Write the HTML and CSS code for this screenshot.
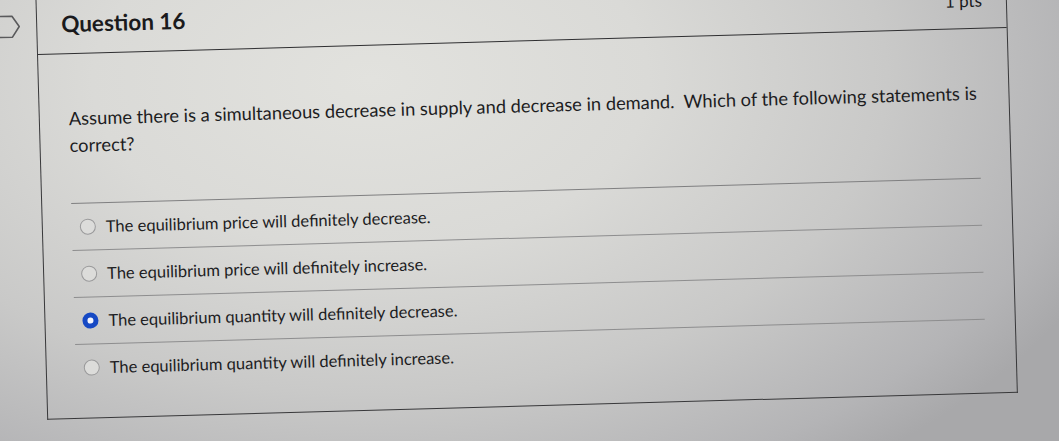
FILE: index.html
```html
<!DOCTYPE html>
<html lang="en">
<head>
<meta charset="utf-8">
<title>Question 16</title>
<link rel="stylesheet" href="styles.css">
</head>
<body>
<div class="page">
  <section class="card">
    <header class="card-header">
      <svg class="flag" width="40" height="24" viewBox="0 0 40 24" aria-hidden="true">
        <path d="M0 1.5 H31 L38 12 L31 22.5 H0" fill="none" stroke="#5a5a5c" stroke-width="1.6" stroke-linejoin="round"/>
      </svg>
      <h2 class="title">Question 16</h2>
      <span class="points">1 pts</span>
    </header>
    <div class="card-body">
      <p class="question">Assume there is a simultaneous decrease in supply and decrease in demand.&nbsp; Which of the following statements is correct?</p>
      <ul class="answers">
        <li class="answer"><span class="radio"></span><span class="answer-text">The equilibrium price will definitely decrease.</span></li>
        <li class="answer"><span class="radio"></span><span class="answer-text">The equilibrium price will definitely increase.</span></li>
        <li class="answer"><span class="radio radio-checked"></span><span class="answer-text">The equilibrium quantity will definitely decrease.</span></li>
        <li class="answer"><span class="radio"></span><span class="answer-text">The equilibrium quantity will definitely increase.</span></li>
      </ul>
    </div>
  </section>
</div>
</body>
</html>
```

FILE: styles.css
```css
html, body {
  margin: 0;
  padding: 0;
}

body {
  width: 1059px;
  height: 441px;
  overflow: hidden;
  font-family: Lato, "Open Sans", sans-serif;
  color: #1d1d1f;
  background: radial-gradient(ellipse 75% 110% at 35% 18%, #e2e2de 0%, #dadad7 35%, #c9c9c8 65%, #b4b4b6 90%, #a8a8aa 100%);
}

.page {
  padding-left: 37px;
}

.card {
  width: 971px;
  box-sizing: border-box;
  border: 1px solid #38383a;
  border-top: 0;
  transform: rotate(-1.6deg);
  transform-origin: 0 54px;
}

.card-header {
  position: relative;
  height: 55px;
  box-sizing: border-box;
  border-bottom: 1px solid #2f2f31;
  display: flex;
  justify-content: space-between;
  align-items: baseline;
  padding: 11px 24px 0 24px;
}

.flag {
  position: absolute;
  left: -56px;
  top: 14px;
}

.title {
  margin: 0;
  font-size: 22.5px;
  font-weight: 700;
  line-height: 28px;
  color: #1a1a1c;
}

.points {
  font-size: 17px;
  color: #1a1a1c;
}

.card-body {
  padding: 51px 30px 27px 29px;
}

.question {
  margin: 0 -12px 0 0;
  font-size: 18.3px;
  line-height: 27px;
  color: #1d1d1f;
}

.answers {
  list-style: none;
  margin: 44px 0 0;
  padding: 0;
}

.answer {
  height: 47px;
  box-sizing: border-box;
  border-top: 1px solid #8d8d8e;
  display: flex;
  align-items: center;
  gap: 10px;
  padding-left: 8px;
}

.answer:first-child {
  border-top-color: #7f7f80;
}

.radio {
  width: 16px;
  height: 16px;
  box-sizing: border-box;
  border-radius: 50%;
  border: 1px solid #9a9a9b;
  background: #dcdcda;
  flex: none;
}

.radio-checked {
  border: 5px solid #1649c4;
  background: #f4f6ff;
}

.answer-text {
  font-size: 16.5px;
  line-height: 20px;
  color: #1d1d1f;
}
```
